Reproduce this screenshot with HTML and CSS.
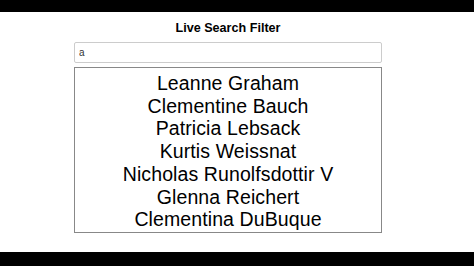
FILE: index.html
```html
<!DOCTYPE html>
<html lang="en">

<head>
    <meta charset="UTF-8">
    <meta name="viewport" content="width=device-width, initial-scale=1.0">
    <title>Live Search Filter</title>
    <link rel="stylesheet" href="styles.css">
</head>

<body>
    <div class="bar"></div>
    <div id="live-search">
        <h1>Live Search Filter</h1>
        <input type="text" id="search" value="a">
        <ul class="results">
            <li>Leanne Graham</li>
            <li>Clementine Bauch</li>
            <li>Patricia Lebsack</li>
            <li>Kurtis Weissnat</li>
            <li>Nicholas Runolfsdottir V</li>
            <li>Glenna Reichert</li>
            <li>Clementina DuBuque</li>
        </ul>
    </div>
    <div class="bar bottom"></div>
</body>

</html>
```

FILE: styles.css
```css
* {
    box-sizing: border-box;
    padding: 0;
    margin: 0;
}

body {
    width: 474px;
    height: 266px;
    overflow: hidden;
    background-color: #fff;
    font-family: "Liberation Sans", Arial, sans-serif;
    color: #000;
    display: flex;
    flex-direction: column;
}

.bar {
    height: 12px;
    background-color: #000;
}

.bar.bottom {
    height: 14px;
    margin-top: auto;
}

#live-search {
    width: 308px;
    margin-left: 74px;
    display: flex;
    flex-direction: column;
}

#live-search h1 {
    font-size: 12.6px;
    font-weight: bold;
    text-align: center;
    margin-top: 9px;
    line-height: 15px;
}

#live-search input {
    width: 100%;
    height: 21px;
    margin-top: 6px;
    border: 1px solid #ccc;
    border-radius: 2px;
    padding: 0 4px;
    font-family: "Liberation Sans", Arial, sans-serif;
    font-size: 10px;
    color: #333;
}

.results {
    list-style: none;
    margin-top: 4px;
    border: 1px solid #888;
    padding: 4px 0 1px;
    text-align: center;
    font-size: 19.5px;
    line-height: 22.7px;
    letter-spacing: 0.1px;
}
```
